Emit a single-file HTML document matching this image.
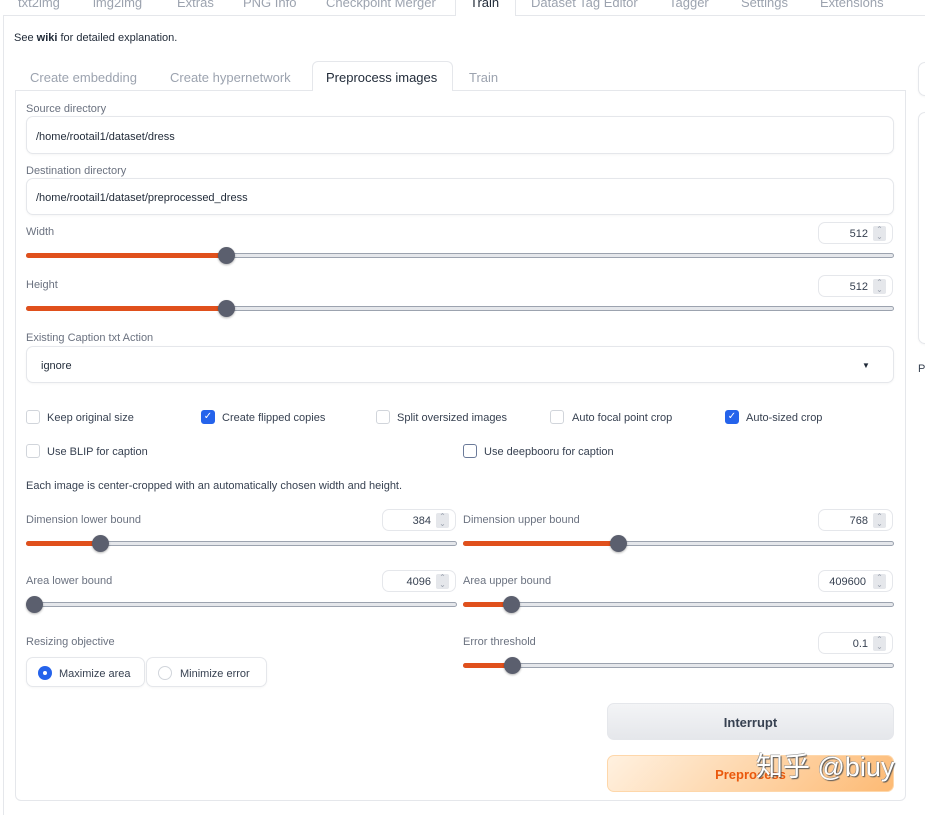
<!DOCTYPE html>
<html><head><meta charset="utf-8"><style>
*{box-sizing:border-box;margin:0;padding:0}
body{width:925px;height:802px;overflow:hidden;background:#fff;font-family:"Liberation Sans",sans-serif;position:relative;color:#1f2937}
.a{position:absolute;white-space:nowrap;margin-top:2px}
.tt{font-size:13px;color:#9ca3af;top:-7px}
.lab{font-size:11px;color:#6b7280}
.box{position:absolute;border:1px solid #e5e7eb;border-radius:7px;background:#fff;box-shadow:0 1px 2px rgba(0,0,0,.04)}
.num{position:absolute;border:1px solid #e5e7eb;border-radius:7px;background:#fff;height:22px;font-size:11px;color:#374151}
.num span{position:absolute;right:24px;top:5px}
.num i{position:absolute;right:6px;top:3px;width:13px;height:15px;background:#e5e7eb;border-radius:2px;font-style:normal;font-size:8px;color:#9ca3af;text-align:center;line-height:7px}
.tr{position:absolute;height:5px;border:1px solid #9ca3af;border-radius:3px;background:#e5e7eb}
.fl{position:absolute;height:5px;background:#e0501c;border-radius:3px}
.th{position:absolute;width:17px;height:17px;border-radius:50%;background:#5b5f6e;box-shadow:0 1px 2px rgba(0,0,0,.3)}
.cb{position:absolute;width:14px;height:14px;border:1px solid #d1d5db;border-radius:3px;background:#fff}
.cb.on{background:#2563eb;border-color:#2563eb;color:#fff;font-size:10px;text-align:center;line-height:12px}
.ct{font-size:11px;color:#374151}
</style></head><body>
<div class="a tt" style="left:18px">txt2img</div>
<div class="a tt" style="left:93px">img2img</div>
<div class="a tt" style="left:177px">Extras</div>
<div class="a tt" style="left:243px">PNG Info</div>
<div class="a tt" style="left:326px">Checkpoint Merger</div>
<div style="position:absolute;left:455px;top:-5px;width:61px;height:21px;border:1px solid #e5e7eb;border-bottom:none;background:#fff;z-index:2"></div>
<div class="a tt" style="left:470px;color:#1f2937;z-index:3">Train</div>
<div class="a tt" style="left:531px">Dataset Tag Editor</div>
<div class="a tt" style="left:669px">Tagger</div>
<div class="a tt" style="left:741px">Settings</div>
<div class="a tt" style="left:820px">Extensions</div>
<div style="position:absolute;left:3px;top:15px;width:930px;height:800px;border-left:1px solid #e5e7eb;border-top:1px solid #e5e7eb"></div>
<div class="a" style="left:14px;top:30px;font-size:11px">See <b>wiki</b> for detailed explanation.</div>

<div class="a" style="left:30px;top:68px;font-size:13px;color:#9ca3af">Create embedding</div>
<div class="a" style="left:170px;top:68px;font-size:13px;color:#9ca3af">Create hypernetwork</div>
<div style="position:absolute;left:312px;top:61px;width:141px;height:30px;border:1px solid #e5e7eb;border-bottom:none;border-radius:6px 6px 0 0;background:#fff;z-index:2"></div>
<div class="a" style="left:326px;top:68px;font-size:13px;color:#1f2937;z-index:3">Preprocess images</div>
<div class="a" style="left:469px;top:68px;font-size:13px;color:#9ca3af">Train</div>
<div style="position:absolute;left:15px;top:90px;width:891px;height:711px;border:1px solid #e5e7eb;border-radius:0 0 6px 6px"></div>
<div class="box" style="left:918px;top:62px;width:20px;height:34px"></div>
<div class="box" style="left:918px;top:112px;width:20px;height:232px"></div>
<div class="a" style="left:918px;top:361px;font-size:11px;color:#374151">P</div>

<div class="a lab" style="left:26px;top:101px">Source directory</div>
<div class="box" style="left:26px;top:116px;width:868px;height:38px"></div>
<div class="a" style="left:36px;top:129px;font-size:11px">/home/rootail1/dataset/dress</div>
<div class="a lab" style="left:26px;top:163px">Destination directory</div>
<div class="box" style="left:26px;top:178px;width:868px;height:37px"></div>
<div class="a" style="left:36px;top:190px;font-size:11px">/home/rootail1/dataset/preprocessed_dress</div>

<div class="a lab" style="left:26px;top:224px">Width</div>
<div class="num" style="left:818px;top:222px;width:75px"><span>512</span><i>⌃<br>⌄</i></div>
<div class="tr" style="left:26px;top:253px;width:868px"></div><div class="fl" style="left:26px;top:253px;width:200px"></div><div class="th" style="left:218px;top:247px"></div>

<div class="a lab" style="left:26px;top:277px">Height</div>
<div class="num" style="left:818px;top:275px;width:75px"><span>512</span><i>⌃<br>⌄</i></div>
<div class="tr" style="left:26px;top:306px;width:868px"></div><div class="fl" style="left:26px;top:306px;width:200px"></div><div class="th" style="left:218px;top:300px"></div>

<div class="a lab" style="left:26px;top:330px">Existing Caption txt Action</div>
<div class="box" style="left:26px;top:346px;width:868px;height:37px"></div>
<div class="a" style="left:41px;top:358px;font-size:11px">ignore</div>
<div class="a" style="left:862px;top:359px;font-size:8px">▼</div>

<div class="cb" style="left:26px;top:410px"></div><div class="a ct" style="left:47px;top:410px">Keep original size</div>
<div class="cb on" style="left:201px;top:410px">✓</div><div class="a ct" style="left:222px;top:410px">Create flipped copies</div>
<div class="cb" style="left:376px;top:410px"></div><div class="a ct" style="left:397px;top:410px">Split oversized images</div>
<div class="cb" style="left:550px;top:410px"></div><div class="a ct" style="left:572px;top:410px">Auto focal point crop</div>
<div class="cb on" style="left:725px;top:410px">✓</div><div class="a ct" style="left:746px;top:410px">Auto-sized crop</div>
<div class="cb" style="left:26px;top:444px"></div><div class="a ct" style="left:47px;top:444px">Use BLIP for caption</div>
<div class="cb" style="left:463px;top:444px;border-color:#6b7a99"></div><div class="a ct" style="left:484px;top:444px">Use deepbooru for caption</div>

<div class="a ct" style="left:26px;top:478px">Each image is center-cropped with an automatically chosen width and height.</div>

<div class="a lab" style="left:26px;top:512px">Dimension lower bound</div>
<div class="num" style="left:382px;top:509px;width:74px"><span>384</span><i>⌃<br>⌄</i></div>
<div class="tr" style="left:26px;top:541px;width:431px"></div><div class="fl" style="left:26px;top:541px;width:75px"></div><div class="th" style="left:92px;top:535px"></div>
<div class="a lab" style="left:463px;top:512px">Dimension upper bound</div>
<div class="num" style="left:818px;top:509px;width:75px"><span>768</span><i>⌃<br>⌄</i></div>
<div class="tr" style="left:463px;top:541px;width:431px"></div><div class="fl" style="left:463px;top:541px;width:156px"></div><div class="th" style="left:610px;top:535px"></div>

<div class="a lab" style="left:26px;top:573px">Area lower bound</div>
<div class="num" style="left:382px;top:570px;width:74px"><span>4096</span><i>⌃<br>⌄</i></div>
<div class="tr" style="left:26px;top:602px;width:431px"></div><div class="th" style="left:26px;top:596px"></div>
<div class="a lab" style="left:463px;top:573px">Area upper bound</div>
<div class="num" style="left:818px;top:570px;width:75px"><span style="right:26px">409600</span><i>⌃<br>⌄</i></div>
<div class="tr" style="left:463px;top:602px;width:431px"></div><div class="fl" style="left:463px;top:602px;width:49px"></div><div class="th" style="left:503px;top:596px"></div>

<div class="a lab" style="left:26px;top:634px">Resizing objective</div>
<div class="box" style="left:26px;top:657px;width:119px;height:30px"></div>
<div style="position:absolute;left:38px;top:666px;width:14px;height:14px;border-radius:50%;background:#2563eb"><div style="position:absolute;left:5px;top:5px;width:4px;height:4px;border-radius:50%;background:#fff"></div></div>
<div class="a ct" style="left:59px;top:666px">Maximize area</div>
<div class="box" style="left:146px;top:657px;width:121px;height:30px"></div>
<div style="position:absolute;left:158px;top:666px;width:14px;height:14px;border-radius:50%;border:1px solid #d1d5db"></div>
<div class="a ct" style="left:180px;top:666px">Minimize error</div>

<div class="a lab" style="left:463px;top:634px">Error threshold</div>
<div class="num" style="left:818px;top:632px;width:75px"><span>0.1</span><i>⌃<br>⌄</i></div>
<div class="tr" style="left:463px;top:663px;width:431px"></div><div class="fl" style="left:463px;top:663px;width:50px"></div><div class="th" style="left:504px;top:657px"></div>

<div style="position:absolute;left:607px;top:703px;width:287px;height:37px;border-radius:7px;background:linear-gradient(#f3f4f6,#e5e7eb);border:1px solid #e5e7eb;text-align:center;line-height:38px;font-size:13px;font-weight:bold;color:#374151">Interrupt</div>
<div style="position:absolute;left:607px;top:755px;width:287px;height:37px;border-radius:7px;background:linear-gradient(135deg,#fff1e0,#fdba74);border:1px solid #fed7aa;text-align:center;line-height:38px;font-size:13px;font-weight:bold;color:#ea580c">Preprocess</div>
<div class="a" style="left:756px;top:743px;font-size:27px;color:#fff;font-family:'Liberation Sans','Noto Sans CJK SC',sans-serif;text-shadow:1px 1px 1px #555,-0.5px -0.5px 0 #888">知乎 @biuy</div>
</body></html>
